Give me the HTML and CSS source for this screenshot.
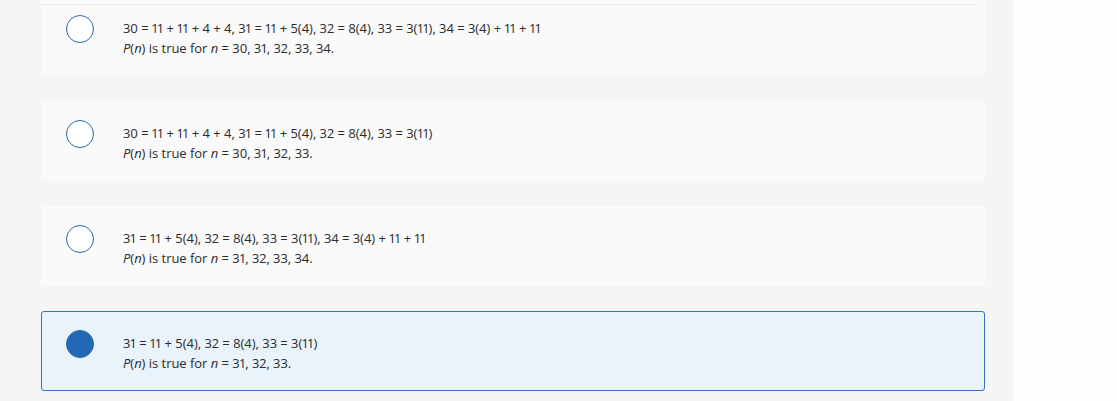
FILE: index.html
```html
<!DOCTYPE html>
<html>
<head>
<meta charset="utf-8">
<link rel="stylesheet" href="styles.css">
</head>
<body>
<div class="page">
  <div class="list">
    <div class="card first">
      <div class="rule"></div>
      <div class="row">
        <span class="radio"></span>
        <div class="text">
          <div>30 = 11 + 11 + 4 + 4, 31 = 11 + 5(4), 32 = 8(4), 33 = 3(11), 34 = 3(4) + 11 + 11</div>
          <div><i>P</i>(<i>n</i>) is true for <i>n</i> = 30, 31, 32, 33, 34.</div>
        </div>
      </div>
    </div>
    <div class="card">
      <div class="row">
        <span class="radio"></span>
        <div class="text">
          <div>30 = 11 + 11 + 4 + 4, 31 = 11 + 5(4), 32 = 8(4), 33 = 3(11)</div>
          <div><i>P</i>(<i>n</i>) is true for <i>n</i> = 30, 31, 32, 33.</div>
        </div>
      </div>
    </div>
    <div class="card">
      <div class="row">
        <span class="radio"></span>
        <div class="text">
          <div>31 = 11 + 5(4), 32 = 8(4), 33 = 3(11), 34 = 3(4) + 11 + 11</div>
          <div><i>P</i>(<i>n</i>) is true for <i>n</i> = 31, 32, 33, 34.</div>
        </div>
      </div>
    </div>
    <div class="card selected">
      <div class="row">
        <span class="radio checked"></span>
        <div class="text">
          <div>31 = 11 + 5(4), 32 = 8(4), 33 = 3(11)</div>
          <div><i>P</i>(<i>n</i>) is true for <i>n</i> = 31, 32, 33.</div>
        </div>
      </div>
    </div>
  </div>
</div>
</body>
</html>
```
FILE: styles.css
```css
html, body {
  margin: 0;
  padding: 0;
  background: #fefefe;
}
.page {
  width: 1013px;
  height: 401px;
  background: #f5f5f5;
  overflow: hidden;
}
.list {
  display: flex;
  flex-direction: column;
  gap: 25px;
  margin-top: -4px;
  padding-left: 41px;
  width: 944px;
}
.card {
  box-sizing: border-box;
  height: 80px;
  background: #fafafa;
  border-radius: 3px;
  border: 1px solid transparent;
  padding: 18px 0 0 24px;
}
.card.first {
  padding-top: 7px;
}
.rule {
  height: 1px;
  width: 934px;
  margin-left: -25px;
  margin-bottom: 10px;
  background: #ececec;
}
.card.selected {
  background: #e9f3fc;
  border-color: #2d76c8;
}
.row {
  display: flex;
  align-items: flex-start;
}
.radio {
  box-sizing: border-box;
  flex: none;
  width: 28px;
  height: 28px;
  border-radius: 50%;
  border: 1.5px solid #2467ad;
  background: #ffffff;
}
.radio.checked {
  background: #2369b6;
  border-color: #2369b6;
}
.text {
  margin-left: 29px;
  margin-top: 4px;
  font-family: "Open Sans", "Liberation Sans", sans-serif;
  font-size: 13px;
  line-height: 19.5px;
  letter-spacing: -0.03px;
  color: #2b2b2b;
  font-variant-numeric: proportional-nums;
}
```
